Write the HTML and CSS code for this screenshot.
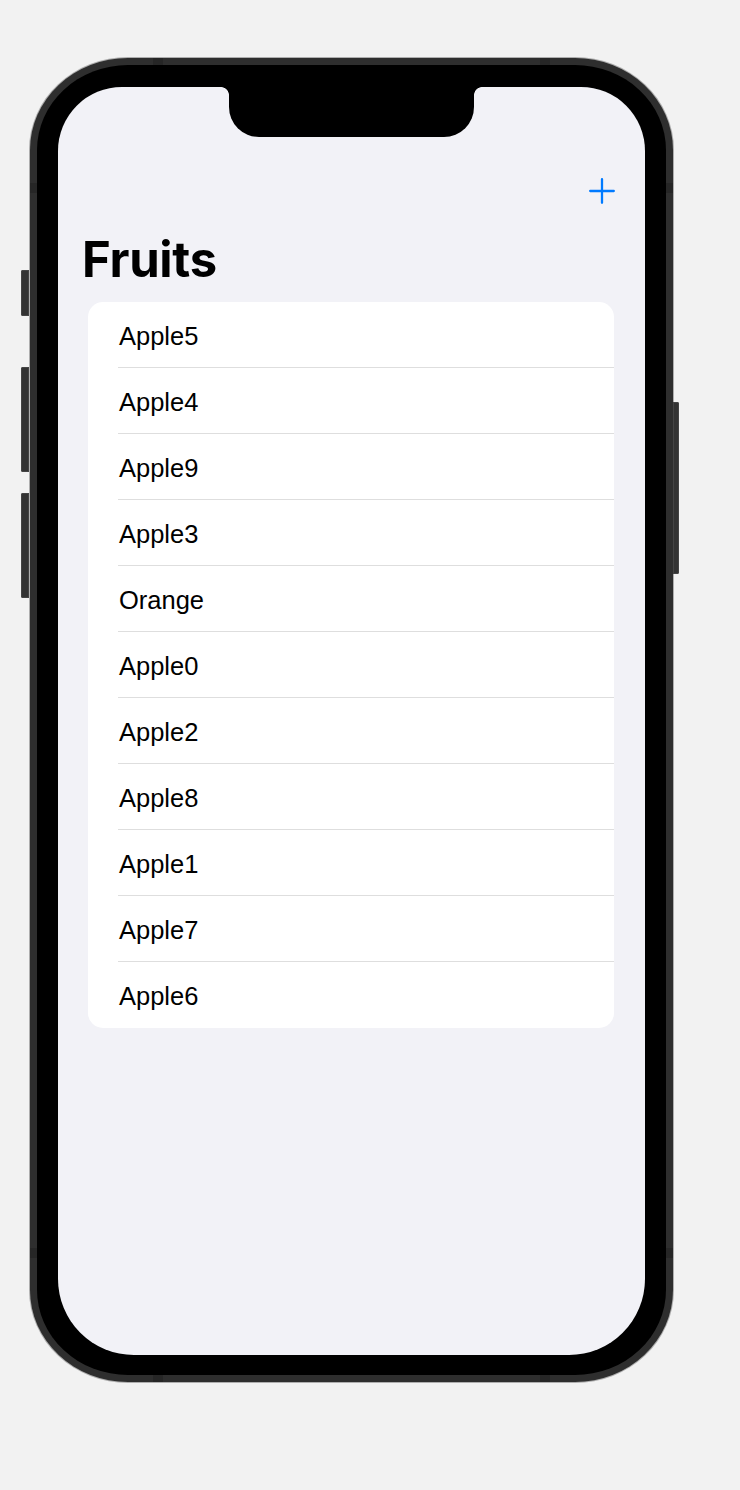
FILE: index.html
```html
<!DOCTYPE html>
<html lang="en">
<head>
<meta charset="utf-8">
<title>Fruits</title>
<link rel="stylesheet" href="styles.css">
</head>
<body>
<div class="stage">
  <div class="phone">
    <span class="btn btn-l1"></span>
    <span class="btn btn-l2"></span>
    <span class="btn btn-l3"></span>
    <span class="btn btn-r1"></span>
    <span class="band band-tl"></span>
    <span class="band band-tr"></span>
    <span class="band band-bl"></span>
    <span class="band band-br"></span>
    <span class="band band-lt"></span>
    <span class="band band-rt"></span>
    <span class="band band-lb"></span>
    <span class="band band-rb"></span>
    <div class="bezel">
      <div class="screen">
        <div class="notch"></div>
        <div class="navbar">
          <svg class="plus" width="26" height="26" viewBox="0 0 26 26" aria-label="Add">
            <path d="M13 1.2V24.8M1.2 13H24.8" stroke="#007aff" stroke-width="2.3" stroke-linecap="round" fill="none"/>
          </svg>
        </div>
        <h1 class="title">Fruits</h1>
        <ul class="list">
          <li class="row"><span class="row-inner">Apple5</span></li>
          <li class="row"><span class="row-inner">Apple4</span></li>
          <li class="row"><span class="row-inner">Apple9</span></li>
          <li class="row"><span class="row-inner">Apple3</span></li>
          <li class="row"><span class="row-inner">Orange</span></li>
          <li class="row"><span class="row-inner">Apple0</span></li>
          <li class="row"><span class="row-inner">Apple2</span></li>
          <li class="row"><span class="row-inner">Apple8</span></li>
          <li class="row"><span class="row-inner">Apple1</span></li>
          <li class="row"><span class="row-inner">Apple7</span></li>
          <li class="row"><span class="row-inner">Apple6</span></li>
        </ul>
      </div>
    </div>
  </div>
</div>
</body>
</html>
```

FILE: styles.css
```css
html, body {
  margin: 0;
  padding: 0;
  background: #f2f2f2;
}

body {
  font-family: "Liberation Sans", Arial, sans-serif;
  width: 740px;
  height: 1490px;
  overflow: hidden;
}

.stage {
  padding: 58px 0 0 30px;
}

.phone {
  position: relative;
  width: 643px;
  height: 1324px;
  box-sizing: border-box;
  padding: 7px;
  background: #2e2e2e;
  border-radius: 98px / 92px;
  box-shadow: 0 0 0 1px rgba(90, 90, 90, 0.45);
}

.bezel {
  height: 100%;
  box-sizing: border-box;
  padding: 22px 21px 20px 21px;
  background: #000;
  border-radius: 91px / 85px;
}

.screen {
  position: relative;
  height: 100%;
  background: #f2f2f7;
  border-radius: 64px 64px 76px 76px;
  overflow: hidden;
  padding-top: 91px;
  box-sizing: border-box;
}

.notch {
  position: absolute;
  top: 0;
  left: 50%;
  width: 245px;
  height: 50px;
  margin-left: -123px;
  background: #000;
  border-radius: 0 0 30px 30px;
}

.notch::before,
.notch::after {
  content: "";
  position: absolute;
  top: 0;
  width: 8px;
  height: 8px;
}

.notch::before {
  left: -8px;
  background: radial-gradient(circle at 0 100%, transparent 7.5px, #000 8.2px);
}

.notch::after {
  right: -8px;
  background: radial-gradient(circle at 100% 100%, transparent 7.5px, #000 8.2px);
}

.navbar {
  display: flex;
  justify-content: flex-end;
  padding-right: 30px;
  height: 26px;
}

.plus {
  display: block;
}

.title {
  margin: 26px 0 0 0;
  padding-left: 24px;
  font-family: Inter, "Liberation Sans", sans-serif;
  font-weight: 700;
  font-size: 49px;
  line-height: 59px;
  letter-spacing: -0.3px;
  color: #000;
}

.list {
  list-style: none;
  margin: 13px 31px 0 30px;
  padding: 0;
  background: #fff;
  border-radius: 15px;
  overflow: hidden;
}

.row {
  height: 66px;
  padding-left: 30px;
  box-sizing: border-box;
}

.row-inner {
  display: block;
  height: 66px;
  box-sizing: border-box;
  padding-top: 4px;
  padding-left: 1px;
  line-height: 60px;
  font-size: 25.5px;
  color: #000;
  border-bottom: 1px solid #dedede;
}

.row:last-child .row-inner {
  border-bottom: none;
}

.btn {
  position: absolute;
  background: #333;
  box-shadow: inset 0 0 0 1px #444;
}

.btn-l1, .btn-l2, .btn-l3 {
  left: -9px;
  width: 8px;
  border-radius: 2px 0 0 2px;
}

.btn-l1 { top: 212px; height: 46px; }
.btn-l2 { top: 309px; height: 105px; }
.btn-l3 { top: 435px; height: 105px; }

.btn-r1 {
  left: 643px;
  top: 344px;
  width: 6px;
  height: 172px;
  border-radius: 0 2px 2px 0;
}

.band {
  position: absolute;
  background: #262626;
}

.band-tl, .band-tr { top: 0; width: 10px; height: 7px; }
.band-bl, .band-br { bottom: 0; width: 10px; height: 7px; }
.band-tl, .band-bl { left: 123px; }
.band-tr, .band-br { left: 510px; }

.band-lt, .band-rt { top: 125px; width: 7px; height: 10px; }
.band-lb, .band-rb { top: 1190px; width: 7px; height: 10px; }
.band-lt, .band-lb { left: 0; }
.band-rt, .band-rb { right: 0; }
```
